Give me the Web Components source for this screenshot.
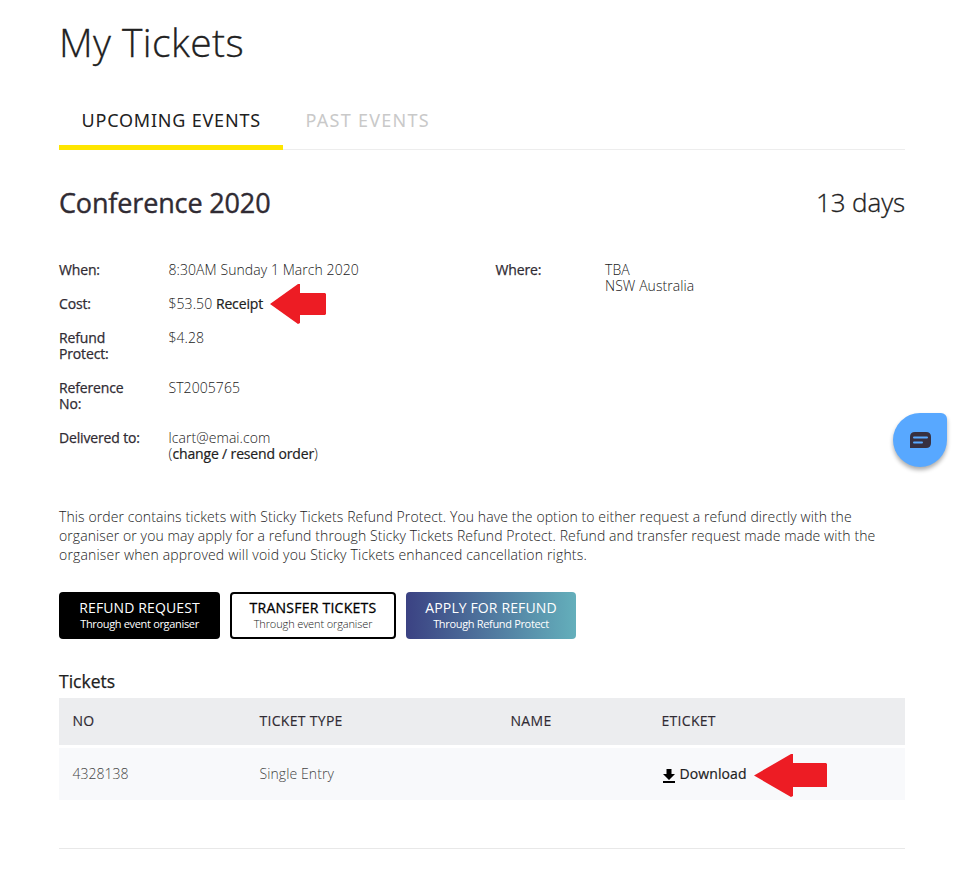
<!DOCTYPE html>
<html lang="en">
<head>
  <meta charset="UTF-8" />
  <title>My Tickets</title>
  <style>
    body {
      margin: 0;
      background: #fff;
      color: #212121;
      font: 300 14px/16px "Open Sans", "Noto Sans", sans-serif;
      font-variant-ligatures: none;
    }
  </style>
</head>
<body>
  <tickets-page>
    <tab-bar slot="tabs"></tab-bar>

    <event-card slot="event" name="Conference 2020" countdown="13 days">
      <div slot="details">
        <detail-row label="When:">8:30AM Sunday 1 March 2020</detail-row>
        <detail-row label="Cost:">$53.50 <text-link>Receipt</text-link><pointer-arrow style="--x:7px;--y:-12px" size="small"></pointer-arrow></detail-row>
        <detail-row label="Refund Protect:">$4.28</detail-row>
        <detail-row label="Reference No:">ST2005765</detail-row>
        <detail-row label="Delivered to:">lcart@emai.com<br />(<text-link>change / resend order</text-link>)</detail-row>
      </div>
      <div slot="venue">
        <detail-row label="Where:">TBA<br />NSW Australia</detail-row>
      </div>
      This order contains tickets with Sticky Tickets Refund Protect. You have the option to either request a refund directly with the<br />
      organiser or you may apply for a refund through Sticky Tickets Refund Protect. Refund and transfer request made made with the<br />
      <span style="letter-spacing:.18px">organiser when approved will void you Sticky Tickets enhanced cancellation rights.</span>
    </event-card>

    <action-button slot="actions" kind="solid" style="width:161px" note="Through event organiser">Refund request</action-button>
    <action-button slot="actions" kind="outline" style="width:166px" note="Through event organiser">Transfer tickets</action-button>
    <action-button slot="actions" kind="gradient" style="width:170px" note="Through Refund Protect">Apply for refund</action-button>

    <ticket-table slot="tickets"></ticket-table>
  </tickets-page>
  <chat-bubble></chat-bubble>

  <script>
    class TicketsPage extends HTMLElement {
      constructor() {
        super();
        this.attachShadow({ mode: 'open' });
      }

      connectedCallback() {
        this.shadowRoot.innerHTML = `
          <style>
            :host {
              display: flex;
              flex-direction: column;
              box-sizing: border-box;
              width: 846px;
              height: 849px;
              margin-left: 59px;
              padding-top: 15px;
              border-bottom: 1px solid #e8e8e8;
            }
            h1 {
              margin: 0 0 22px;
              font-size: 39px;
              font-weight: 300;
              line-height: 54px;
              letter-spacing: .4px;
              -webkit-text-stroke: .3px;
            }
            .actions {
              display: flex;
              gap: 10px;
              margin-top: 28px;
            }
            h3 {
              margin: 30px 0 5px;
              font-size: 17.5px;
              font-weight: 400;
              line-height: 24px;
              -webkit-text-stroke: .25px;
            }
          </style>
          <h1>My Tickets</h1>
          <slot name="tabs"></slot>
          <slot name="event"></slot>
          <div class="actions"><slot name="actions"></slot></div>
          <h3>Tickets</h3>
          <slot name="tickets"></slot>
        `;
      }
    }

    class TabBar extends HTMLElement {
      constructor() {
        super();
        this.attachShadow({ mode: 'open' });
      }

      connectedCallback() {
        this.shadowRoot.innerHTML = `
          <style>
            :host {
              display: flex;
              height: 59px;
              box-shadow: inset 0 -1px #ededed;
              font: 400 18px/59px "Noto Sans", sans-serif;
              letter-spacing: 1.28px;
              text-transform: uppercase;
            }
            a {
              box-sizing: border-box;
              padding-left: 22.5px;
              color: #c9c9c9;
            }
            .active {
              width: 224px;
              border-bottom: 5px solid #fee600;
              color: #212121;
              letter-spacing: .8px;
            }
          </style>
          <a class="active">Upcoming events</a>
          <a>Past events</a>
        `;
      }
    }

    class EventCard extends HTMLElement {
      constructor() {
        super();
        this.attachShadow({ mode: 'open' });
      }

      connectedCallback() {
        this.shadowRoot.innerHTML = `
          <style>
            :host { display: block; }
            header {
              display: flex;
              justify-content: space-between;
              align-items: flex-start;
              margin-top: 34px;
              line-height: 36px;
            }
            h2 {
              margin: 1px 0 0;
              color: #302b33;
              font-size: 27px;
              font-weight: 400;
              letter-spacing: -.15px;
              -webkit-text-stroke: .4px;
            }
            .countdown {
              font-size: 26px;
              letter-spacing: -.1px;
              -webkit-text-stroke: .3px;
            }
            .columns {
              display: grid;
              grid-template-columns: 436.5px 1fr;
              margin-top: 41px;
            }
            p {
              margin: 45px 0 0;
              color: #222;
              line-height: 19px;
              letter-spacing: .095px;
              white-space: nowrap;
            }
          </style>
          <header>
            <h2>${this.getAttribute('name')}</h2>
            <span class="countdown">${this.getAttribute('countdown')}</span>
          </header>
          <div class="columns">
            <slot name="details"></slot>
            <slot name="venue"></slot>
          </div>
          <p><slot></slot></p>
        `;
      }
    }

    class DetailRow extends HTMLElement {
      constructor() {
        super();
        this.attachShadow({ mode: 'open' });
      }

      connectedCallback() {
        this.shadowRoot.innerHTML = `
          <style>
            :host {
              display: grid;
              grid-template-columns: 84px 1fr;
              column-gap: 25.5px;
              margin-bottom: 18px;
            }
            :host(:last-child) { margin-bottom: 0; }
            .label {
              color: #302b33;
              font-weight: 400;
              letter-spacing: -.15px;
              -webkit-text-stroke: .25px;
            }
            .value { letter-spacing: .07px; }
          </style>
          <span class="label">${this.getAttribute('label')}</span>
          <span class="value"><slot></slot></span>
        `;
      }
    }

    class TextLink extends HTMLElement {
      constructor() {
        super();
        this.attachShadow({ mode: 'open' });
      }

      connectedCallback() {
        // no whitespace around the slot, the link sits inside running text
        this.shadowRoot.innerHTML = `<style>
            :host {
              display: inline;
              color: #212121;
              font-weight: 400;
              letter-spacing: -.15px;
              -webkit-text-stroke: .2px;
            }
          </style><slot></slot>`;
      }
    }

    // Red callout arrow, laid over the text next to it
    class PointerArrow extends HTMLElement {
      constructor() {
        super();
        this.attachShadow({ mode: 'open' });
      }

      connectedCallback() {
        const small = this.getAttribute('size') === 'small';
        const svg = small
          ? '<svg width="56" height="40"><path d="M0 20L28 0H30V9H55L56 10V30L55 31H30V39L28 40Z" /></svg>'
          : '<svg width="73" height="43"><path d="M0 21.500L37 0H39V9H72L73 10V33H39V42L37 43Z" /></svg>';

        this.shadowRoot.innerHTML = `
          <style>
            :host {
              display: inline-block;
              position: relative;
              width: 0;
              height: 0;
              vertical-align: top;
            }
            svg {
              position: absolute;
              left: var(--x);
              top: var(--y);
              fill: #ed1c24;
            }
          </style>
          ${svg}
        `;
      }
    }

    class ActionButton extends HTMLElement {
      constructor() {
        super();
        this.attachShadow({ mode: 'open' });
      }

      connectedCallback() {
        this.shadowRoot.innerHTML = `
          <style>
            :host {
              display: flex;
              flex-direction: column;
              align-items: center;
              box-sizing: border-box;
              height: 47px;
              padding-top: 8px;
              border-radius: 4px;
              color: #fff;
              white-space: nowrap;
            }
            :host([kind="solid"]) { background: #000; }
            :host([kind="outline"]) {
              padding-top: 6px;
              border: 2px solid #000;
              color: #000;
            }
            :host([kind="gradient"]) {
              background: linear-gradient(90deg, #3b4283, #64afbb);
            }
            .title {
              font-weight: 400;
              letter-spacing: .12px;
              text-transform: uppercase;
            }
            :host([kind="outline"]) .title {
              letter-spacing: .25px;
              -webkit-text-stroke: .3px;
            }
            .note {
              font-size: 11px;
              font-weight: 400;
              letter-spacing: -.33px;
            }
            :host([kind="outline"]) .note {
              color: #222;
              font-weight: 300;
              letter-spacing: -.12px;
            }
          </style>
          <span class="title"><slot></slot></span>
          <span class="note">${this.getAttribute('note')}</span>
        `;
      }
    }

    class TicketTable extends HTMLElement {
      constructor() {
        super();
        this.attachShadow({ mode: 'open' });
      }

      connectedCallback() {
        this.shadowRoot.innerHTML = `
          <style>
            :host { display: block; }
            .row {
              display: grid;
              grid-template-columns: 187px 251px 151px 1fr;
              align-items: center;
              box-sizing: border-box;
              height: 52px;
              padding-left: 13.5px;
              background: #f8f9fb;
              color: #444;
            }
            .head {
              height: 47px;
              margin-bottom: 3px;
              padding-bottom: 2px;
              background: #ecedef;
              color: #302b33;
              font-weight: 400;
              letter-spacing: .3px;
              -webkit-text-stroke: .15px;
            }
            .download {
              display: flex;
              align-items: center;
            }
            .icon {
              margin: 4px 4.5px 0 1.5px;
            }
          </style>
          <div class="row head">
            <span>NO</span>
            <span>TICKET TYPE</span>
            <span>NAME</span>
            <span>ETICKET</span>
          </div>
          <div class="row">
            <span>4328138</span>
            <span style="letter-spacing:.1px">Single Entry</span>
            <span></span>
            <span class="download">
              <svg class="icon" width="12" height="14"><path d="M3.500 0H8.500V5H12L6 11L0 5H3.500ZM0 12H12V14H0Z" /></svg>
              <text-link style="letter-spacing:.1px">Download</text-link>
              <pointer-arrow style="--x:7px;--y:-20px"></pointer-arrow>
            </span>
          </div>
        `;
      }
    }

    class ChatBubble extends HTMLElement {
      constructor() {
        super();
        this.attachShadow({ mode: 'open' });
      }

      connectedCallback() {
        this.shadowRoot.innerHTML = `
          <style>
            :host {
              position: fixed;
              left: 893px;
              top: 413px;
              display: flex;
              align-items: center;
              justify-content: center;
              width: 54px;
              height: 54px;
              border-radius: 27px 6px 27px 27px;
              background: #58a8ff;
              box-shadow: 0 3px 4px rgba(0, 0, 0, .32);
            }
          </style>
          <svg width="21" height="16">
            <path fill="#373040" d="M5 0H16Q21 0 21 5V11Q21 16 16 16H0V5Q0 0 5 0Z" />
            <path stroke="#58a8ff" stroke-width="2" stroke-linecap="round" d="M4 5.500H17M4 10.500H12" />
          </svg>
        `;
      }
    }

    customElements.define('tickets-page', TicketsPage);
    customElements.define('tab-bar', TabBar);
    customElements.define('event-card', EventCard);
    customElements.define('detail-row', DetailRow);
    customElements.define('text-link', TextLink);
    customElements.define('pointer-arrow', PointerArrow);
    customElements.define('action-button', ActionButton);
    customElements.define('ticket-table', TicketTable);
    customElements.define('chat-bubble', ChatBubble);
  </script>
</body>
</html>
